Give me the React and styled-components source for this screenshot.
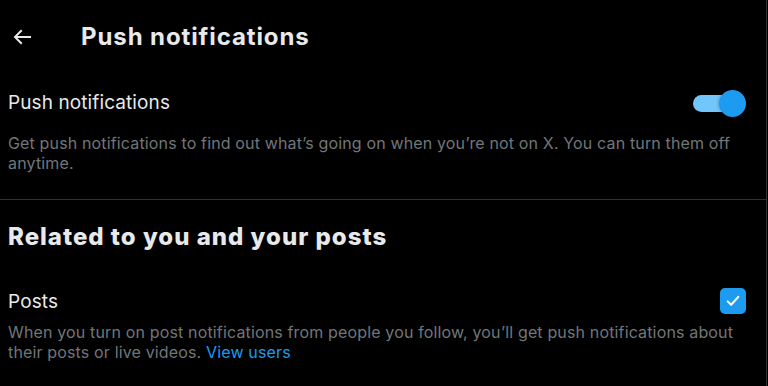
import React from "react";
import styled, { createGlobalStyle } from "styled-components";

const Global = createGlobalStyle`
  html, body { margin: 0; padding: 0; background: #000; }
  body { font-family: Inter, "Noto Sans", sans-serif; color: #e7e9ea; -webkit-font-smoothing: antialiased; }
  * { box-sizing: border-box; }
`;

const Page = styled.div`
  width: 767px;
  min-height: 386px;
  background: #000;
  border-right: 1px solid #2f3336;
`;

const Header = styled.header`
  display: flex;
  align-items: center;
  height: 68px;
  padding: 5px 8px 0;
`;

const BackButton = styled.button`
  width: 28px;
  height: 28px;
  display: flex;
  align-items: center;
  justify-content: center;
  background: none;
  border: none;
  padding: 0;
  color: #e7e9ea;
  cursor: pointer;
`;

const Title = styled.h1`
  margin: 0 0 0 45px;
  font-size: 24px;
  font-weight: 700;
  letter-spacing: 0.9px;
  line-height: 30px;
  color: #e7e9ea;
`;

const Section = styled.section`
  padding: ${(p) => p.$pt || 0}px 20px ${(p) => p.$pb || 0}px 8px;
  border-bottom: ${(p) => (p.$divider ? "1px solid #2f3336" : "none")};
`;

const Row = styled.div`
  display: flex;
  align-items: center;
  justify-content: space-between;
  height: ${(p) => p.$h}px;
`;

const Label = styled.span`
  font-size: 19px;
  line-height: 24px;
  letter-spacing: 0.1px;
  color: #e7e9ea;
`;

const Desc = styled.p`
  margin: ${(p) => p.$mt || 0}px 0 0;
  font-size: 16px;
  letter-spacing: 0.15px;
  line-height: 20px;
  color: #71767b;
`;

const Link = styled.a`
  color: #1d9bf0;
  text-decoration: none;
`;

const Heading = styled.h2`
  margin: 0;
  font-size: 24px;
  font-weight: 800;
  letter-spacing: 1px;
  line-height: 32px;
  color: #e7e9ea;
`;

const ToggleWrap = styled.div`
  position: relative;
  width: 54px;
  height: 27px;
`;

const Track = styled.div`
  position: absolute;
  left: 1px;
  top: 5px;
  width: 40px;
  height: 17px;
  border-radius: 9px;
  background: #72c6fb;
`;

const Knob = styled.div`
  position: absolute;
  right: 0;
  top: 0;
  width: 27px;
  height: 27px;
  border-radius: 50%;
  background: #1d9bf0;
  box-shadow: -1px 0 3px rgba(0, 0, 0, 0.2);
`;

const Checkbox = styled.div`
  width: 26px;
  height: 26px;
  border-radius: 5px;
  background: #1d9bf0;
  display: flex;
  align-items: center;
  justify-content: center;
  margin-top: -2px;
`;

const Toggle = () => (
  <ToggleWrap>
    <Track />
    <Knob />
  </ToggleWrap>
);

export default function App() {
  return (
    <Page>
      <Global />
      <Header>
        <BackButton aria-label="Back">
          <svg width="24" height="24" viewBox="0 0 24 24" fill="currentColor">
            <path d="M7.414 13l5.043 5.04-1.414 1.42L3.586 12l7.457-7.46 1.414 1.42L7.414 11H21v2H7.414z" />
          </svg>
        </BackButton>
        <Title>Push notifications</Title>
      </Header>
      <Section $pt={12} $pb={26} $divider>
        <Row $h={46}>
          <Label>Push notifications</Label>
          <Toggle />
        </Row>
        <Desc $mt={7}>
          Get push notifications to find out what’s going on when you’re not on X. You can turn them off anytime.
        </Desc>
      </Section>
      <Section $pt={21}>
        <Heading>Related to you and your posts</Heading>
      </Section>
      <Section $pt={29}>
        <Row $h={40}>
          <Label>Posts</Label>
          <Checkbox>
            <svg width="18" height="18" viewBox="0 0 24 24" fill="none" stroke="#fff" strokeWidth="2.8" strokeLinecap="round" strokeLinejoin="round">
              <path d="M5 12.5l4.5 4.5L19 6.5" />
            </svg>
          </Checkbox>
        </Row>
        <Desc>
          When you turn on post notifications from people you follow, you’ll get push notifications about their posts or live videos. <Link href="#">View users</Link>
        </Desc>
      </Section>
    </Page>
  );
}
